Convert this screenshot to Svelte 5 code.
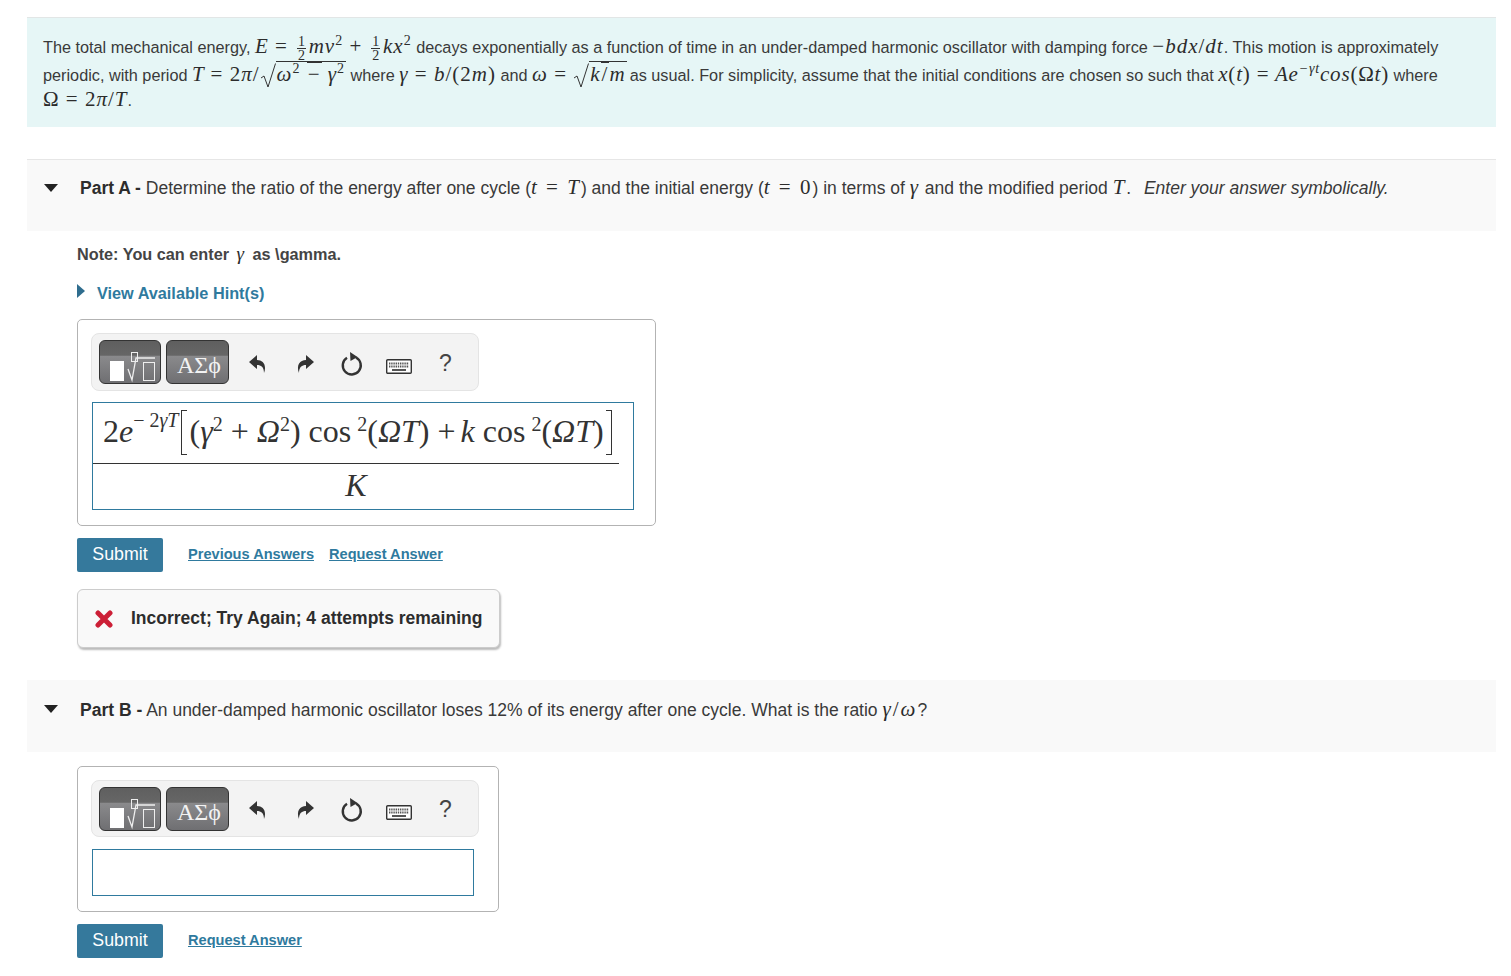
<!-- Mastering-style problem page: intro, Part A with answer, Part B empty -->

<style>
  :global(body) {
    background: #fff;
    color: #3a3a3a;
    font-family: "Liberation Sans", Arial, sans-serif;
    font-size: 16.25px;
  }

  .page {
    padding: 17px 15px 0 27px;
    height: 959px;
    overflow: hidden;
  }

  .intro {
    height: 110px;
    box-sizing: border-box;
    background: #e6f6f6;
    border-top: 1px solid #e2e6e6;
    padding: 14px 16px 0;
  }

  .line {
    display: block;
    white-space: nowrap;
    height: 28px;
    line-height: 28px;
  }

  .line.last {
    height: 24px;
    line-height: 24px;
    margin-top: -1px;
  }

  .m {
    font-family: "Liberation Serif", "Times New Roman", serif;
    font-style: italic;
    font-size: 21px;
    letter-spacing: 1px;
    color: #2c2c2c;
  }

  .m.tight {
    letter-spacing: .8px;
  }

  .r {
    font-style: normal;
  }

  .frac {
    display: inline-flex;
    flex-direction: column;
    align-items: center;
    vertical-align: middle;
    font-size: 14px;
    font-style: normal;
    line-height: 13px;
    letter-spacing: 0;
    margin: 0 2.75px;
  }

  .frac i {
    font-style: normal;
    display: block;
    padding: 0 1px;
  }

  .frac i:first-child {
    border-bottom: 1px solid #333;
  }

  sup {
    font-size: 14px;
    line-height: 0;
  }

  .root {
    white-space: nowrap;
  }

  .root svg {
    width: 16px;
    height: 26px;
    vertical-align: -8px;
  }

  .root span {
    border-top: 1px solid #333;
    display: inline-block;
    line-height: 22px;
    height: 22px;
    padding: 0 1px;
  }

  .after-root {
    margin-left: 3px;
  }

  .part {
    box-sizing: border-box;
    height: 72px;
    background: #f9f9f9;
    display: flex;
    padding-top: 15px;
    line-height: 28px;
    font-size: 17.5px;
  }

  .part.a {
    margin-top: 32px;
    border-top: 1px solid #e6e6e6;
    padding-top: 13px;
  }

  .part.b {
    margin-top: 32px;
  }

  .caret {
    width: 53px;
    flex: none;
    padding: 11px 0 0 17px;
    box-sizing: border-box;
  }

  .part.b .caret {
    padding-top: 10px;
  }

  .caret svg {
    display: block;
  }

  .part b {
    color: #2d2d2d;
  }

  .part .m {
    font-size: 21px;
    letter-spacing: 2px;
  }

  .enter {
    margin-left: 3px;
  }

  .body {
    padding-left: 50px;
  }

  .note {
    font-weight: bold;
    color: #444;
    margin-top: 11px;
    line-height: 24px;
  }

  .note .m {
    font-weight: normal;
    font-size: 19px;
    margin: 0 3px;
  }

  .hint {
    display: flex;
    align-items: center;
    gap: 12px;
    color: #2f7a9e;
    font-weight: bold;
    margin-top: 15px;
    height: 24px;
  }

  .hint svg {
    margin-top: -5px;
  }

  .answer {
    border: 1px solid #b3b3b3;
    border-radius: 5px;
    box-sizing: border-box;
    padding: 13px 21px 15px 13px;
    margin-top: 14px;
    width: 579px;
  }

  .answer.second {
    width: 422px;
    margin-top: 14px;
  }

  .toolbar {
    box-sizing: border-box;
    width: 388px;
    height: 58px;
    background: #f3f3f3;
    border: 1px solid #e4e4e4;
    border-radius: 8px;
    display: flex;
    align-items: center;
    padding: 0 7px;
  }

  .second .toolbar {
    height: 57px;
  }

  .tbtn {
    box-sizing: border-box;
    height: 44px;
    border: 1px solid #333;
    border-radius: 6px;
    background: linear-gradient(#5f5f5f 0, #666 34%, #8a8a8c 36%, #6f6f72 100%);
    flex: none;
    color: #fff;
    position: relative;
  }

  .tbtn.tmpl {
    width: 62px;
    margin-right: 5px;
  }

  .tbtn.tmpl svg {
    position: absolute;
    left: 7px;
    top: 2px;
  }

  .tbtn.sym {
    width: 63px;
    font-family: "Liberation Serif", serif;
    font-size: 24px;
    text-align: center;
    line-height: 48px;
    color: #f2f2f2;
    margin-right: 5px;
    padding-left: 3px;
  }

  .tool {
    width: 47px;
    flex: none;
    display: flex;
    justify-content: center;
    color: #333;
    padding-top: 3px;
  }

  .tool.kbd {
    padding-top: 8px;
  }

  .tool.q {
    font-size: 23px;
    color: #444;
    padding-top: 2px;
  }

  .input {
    box-sizing: border-box;
    border: 1px solid #2f7a9e;
    margin: 11px 0 0 1px;
  }

  .second .input {
    margin-top: 12px;
  }

  .input.filled {
    height: 108px;
    width: 542px;
    font-family: "Liberation Serif", serif;
    color: #333;
    font-size: 32px;
    padding-top: 6px;
  }

  .input.empty {
    height: 47px;
    width: 382px;
  }

  .num {
    height: 55px;
    padding: 0 0 10px 10px;
    display: flex;
    align-items: center;
    white-space: pre;
    line-height: 44px;
    width: 526px;
    box-sizing: border-box;
    border-bottom: 1px solid #333;
  }

  .num em {
    font-style: italic;
  }

  .num .sp {
    font-size: 20px;
    position: relative;
    top: -11px;
    white-space: pre;
  }

  .num .sq {
    margin-left: 6px;
  }

  .num .k {
    margin-left: -3px;
  }

  .brk {
    display: block;
    height: 43px;
    line-height: 40px;
    margin: 3px 0 0 2px;
    padding: 0 7px 0 8px;
    border: 1px solid #333;
    border-image: linear-gradient(90deg, #333 6px, transparent 6px, transparent calc(100% - 6px), #333 calc(100% - 6px)) 1;
  }

  .den {
    width: 526px;
    text-align: center;
    font-style: italic;
    line-height: 42px;
  }

  .actions {
    display: flex;
    align-items: center;
    margin-top: 12px;
    height: 34px;
  }

  .submit {
    box-sizing: border-box;
    width: 86px;
    height: 34px;
    line-height: 33px;
    background: #35799c;
    border-radius: 2px;
    color: #fff;
    text-align: center;
    font-size: 17.8px;
    margin-right: 25px;
  }

  .actions a {
    color: #2f7a9e;
    font-weight: bold;
    font-size: 14.6px;
    text-decoration: underline;
    margin-right: 15px;
    padding-bottom: 2px;
  }

  .feedback {
    box-sizing: border-box;
    width: 423px;
    height: 59px;
    margin-top: 17px;
    background: #f9f9f9;
    border: 1px solid #ccc;
    border-radius: 6px;
    box-shadow: 1px 2px 2px #bbb;
    display: flex;
    align-items: center;
    padding-left: 17px;
    gap: 18px;
    font-weight: bold;
    font-size: 17.5px;
    color: #2d2d2d;
  }
</style>

{#snippet toolbar()}
  <div class="toolbar">
    <div class="tbtn tmpl">
      <svg width="52" height="40" viewBox="0 0 52 40" fill="none" stroke="#eee" stroke-width="1">
        <rect x="3" y="18" width="14" height="20" fill="#fff" stroke="none" />
        <rect x="24.500" y="9.500" width="6" height="9" />
        <path d="M21 26l4 11 4-22h19" stroke-width="1.3" />
        <rect x="36.500" y="19.500" width="11" height="18" />
      </svg>
    </div>
    <div class="tbtn sym">ΑΣϕ</div>
    <div class="tool">
      <svg width="20" height="22" viewBox="0 0 20 22"><path fill="#333" d="M9 2 1 9l8 7v-4c4 0 7 2 7 8 3-8-1-13-7-13z" /></svg>
    </div>
    <div class="tool">
      <svg width="20" height="22" viewBox="0 0 20 22"><path fill="#333" d="M11 2l8 7-8 7v-4c-4 0-7 2-7 8-3-8 1-13 7-13z" /></svg>
    </div>
    <div class="tool">
      <svg width="24" height="26" viewBox="0 0 24 26" fill="none"><path stroke="#333" stroke-width="2.400" d="M16 6.500A9 9 0 1 1 7 6.800" /><path fill="#333" d="M10 1 17.500 6 10.500 10z" /></svg>
    </div>
    <div class="tool kbd">
      <svg width="26" height="15" viewBox="0 0 26 15"><rect x=".7" y=".7" width="24.600" height="13.600" rx="1" fill="#fff" stroke="#333" stroke-width="1.400" /><path stroke="#555" stroke-width="2" stroke-dasharray="1.400 .8" d="M3 4.500h20M3 7.500h20" /><path stroke="#555" stroke-width="2" d="M6 11h14" /></svg>
    </div>
    <div class="tool q">?</div>
  </div>
{/snippet}

{#snippet caret()}
  <div class="caret">
    <svg width="14" height="8" viewBox="0 0 14 8"><path fill="#222" d="M0 0h14L7 8z" /></svg>
  </div>
{/snippet}

{#snippet radical()}
  <svg viewBox="0 0 16 26" fill="none" stroke="#333"><path d="M1 15l3-2 4 11L15.500 .5" /></svg>
{/snippet}

<div class="page">
  <div class="intro">
    <span class="line">The total mechanical energy, <span class="m">E <span class="r">=</span> <span class="frac"><i>1</i><i>2</i></span>mv<sup class="r">2</sup> <span class="r">+</span> <span class="frac"><i>1</i><i>2</i></span>kx<sup class="r">2</sup></span> decays exponentially as a function of time in an under-damped harmonic oscillator with damping force <span class="m"><span class="r">−</span>bdx<span class="r">/</span>dt</span>. This motion is approximately</span>
    <span class="line">periodic, with period <span class="m">T <span class="r">= 2</span>π<span class="r">/</span><span class="root">{@render radical()}<span>ω<sup class="r">2</sup> <span class="r">−</span> γ<sup class="r">2</sup></span></span></span> where <span class="m">γ <span class="r">=</span> b<span class="r">/(2</span>m<span class="r">)</span></span> and <span class="m">ω <span class="r">=</span> <span class="root">{@render radical()}<span>k<span class="r">/</span>m</span></span></span><span class="after-root"> as usual.</span> For simplicity, assume that the initial conditions are chosen so such that <span class="m tight">x<span class="r">(</span>t<span class="r">) =</span> Ae<sup>−γt</sup>cos<span class="r">(Ω</span>t<span class="r">)</span></span> where</span>
    <span class="line last"><span class="m"><span class="r">Ω = 2</span>π<span class="r">/</span>T</span>.</span>
  </div>

  <div class="part a">
    {@render caret()}
    <div><b>Part A -</b> Determine the ratio of the energy after one cycle (<span class="m">t <span class="r">=</span> T</span>) and the initial energy (<span class="m">t <span class="r">= 0</span></span>) in terms of <span class="m">γ</span> and the modified period <span class="m">T</span>. &nbsp;<i class="enter">Enter your answer symbolically.</i></div>
  </div>

  <div class="body">
    <div class="note">Note: You can enter <span class="m">γ</span> as \gamma.</div>
    <div class="hint">
      <svg width="8" height="14" viewBox="0 0 8 14"><path fill="#2f6d8e" d="M0 0l8 7-8 7z" /></svg>
      <span>View Available Hint(s)</span>
    </div>

    <div class="answer">
      {@render toolbar()}
      <div class="input filled">
        <div class="num"><span>2<em>e</em></span><span class="sp"> − 2<em>γT</em></span><span class="brk">(<em>γ</em><span class="sp">2</span> + <em>Ω</em><span class="sp">2</span>) cos<span class="sp sq"> 2</span>(<em>ΩT</em>) + <em class="k">k</em> cos<span class="sp sq"> 2</span>(<em>ΩT</em>)</span></div>
        <div class="den">K</div>
      </div>
    </div>

    <div class="actions">
      <div class="submit">Submit</div>
      <a href="#prev">Previous Answers</a>
      <a href="#req">Request Answer</a>
    </div>

    <div class="feedback">
      <svg width="18" height="18" viewBox="0 0 18 18"><path stroke="#cc1f36" stroke-width="5" stroke-linecap="round" d="M3 3l12 12M15 3 3 15" /></svg>
      <span>Incorrect; Try Again; 4 attempts remaining</span>
    </div>
  </div>

  <div class="part b">
    {@render caret()}
    <div><b>Part B -</b> An under-damped harmonic oscillator loses 12% of its energy after one cycle. What is the ratio <span class="m">γ<span class="r">/</span>ω</span>?</div>
  </div>

  <div class="body">
    <div class="answer second">
      {@render toolbar()}
      <div class="input empty"></div>
    </div>
    <div class="actions">
      <div class="submit">Submit</div>
      <a href="#req">Request Answer</a>
    </div>
  </div>
</div>
